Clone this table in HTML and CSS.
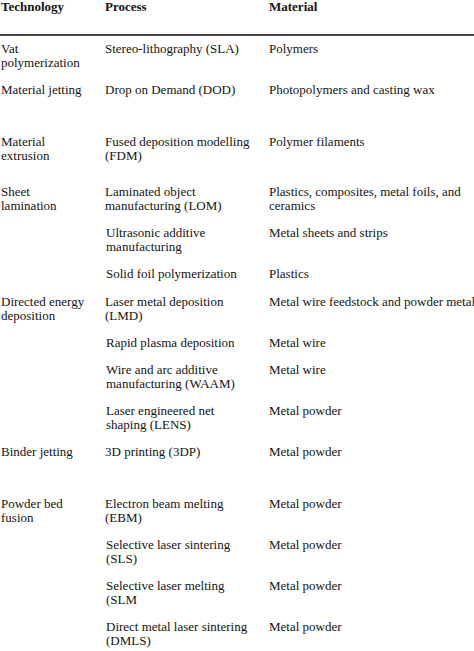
FILE: index.html
```html
<!DOCTYPE html>
<html lang="en">
<head>
<meta charset="utf-8">
<title>Additive manufacturing technologies</title>
<link rel="stylesheet" href="styles.css">
</head>
<body>
<table class="am-table">
  <colgroup>
    <col class="col-tech">
    <col class="col-proc">
    <col class="col-mat">
  </colgroup>
  <thead>
    <tr>
      <th>Technology</th>
      <th>Process</th>
      <th>Material</th>
    </tr>
  </thead>
  <tbody>
    <tr class="first">
      <td>Vat<br>polymerization</td>
      <td>Stereo-lithography (SLA)</td>
      <td>Polymers</td>
    </tr>
    <tr class="gap-xl">
      <td>Material jetting</td>
      <td>Drop on Demand (DOD)</td>
      <td>Photopolymers and casting wax</td>
    </tr>
    <tr class="gap-md">
      <td>Material<br>extrusion</td>
      <td>Fused deposition modelling<br>(FDM)</td>
      <td>Polymer filaments</td>
    </tr>
    <tr>
      <td rowspan="3">Sheet<br>lamination</td>
      <td>Laminated object<br>manufacturing (LOM)</td>
      <td>Plastics, composites, metal foils, and<br>ceramics</td>
    </tr>
    <tr>
      <td>Ultrasonic additive<br>manufacturing</td>
      <td>Metal sheets and strips</td>
    </tr>
    <tr>
      <td>Solid foil polymerization</td>
      <td>Plastics</td>
    </tr>
    <tr>
      <td rowspan="4">Directed energy<br>deposition</td>
      <td>Laser metal deposition<br>(LMD)</td>
      <td>Metal wire feedstock and powder metal</td>
    </tr>
    <tr>
      <td>Rapid plasma deposition</td>
      <td>Metal wire</td>
    </tr>
    <tr>
      <td>Wire and arc additive<br>manufacturing (WAAM)</td>
      <td>Metal wire</td>
    </tr>
    <tr>
      <td>Laser engineered net<br>shaping (LENS)</td>
      <td>Metal powder</td>
    </tr>
    <tr class="gap-xl">
      <td>Binder jetting</td>
      <td>3D printing (3DP)</td>
      <td>Metal powder</td>
    </tr>
    <tr>
      <td rowspan="4">Powder bed<br>fusion</td>
      <td>Electron beam melting<br>(EBM)</td>
      <td>Metal powder</td>
    </tr>
    <tr>
      <td>Selective laser sintering<br>(SLS)</td>
      <td>Metal powder</td>
    </tr>
    <tr>
      <td>Selective laser melting<br>(SLM</td>
      <td>Metal powder</td>
    </tr>
    <tr>
      <td>Direct metal laser sintering<br>(DMLS)</td>
      <td>Metal powder</td>
    </tr>
  </tbody>
</table>
</body>
</html>
```

FILE: styles.css
```css
html, body {
  margin: 0;
  padding: 0;
  overflow: hidden;
  background: #ffffff;
}

body {
  font-family: "Liberation Serif", "Times New Roman", serif;
  font-size: 13px;
  line-height: 14px;
  color: #141414;
}

.am-table {
  width: 474px;
  table-layout: fixed;
  border-collapse: collapse;
  border-spacing: 0;
  font-family: "Liberation Serif", "Times New Roman", serif;
  font-size: 13px;
}

.col-tech { width: 105px; }
.col-proc { width: 164px; }
.col-mat { width: 205px; }

.am-table th,
.am-table td {
  font-family: "Liberation Serif", "Times New Roman", serif;
  padding: 0 0 13.15px 0;
  text-align: left;
  vertical-align: top;
  white-space: nowrap;
}

.am-table th {
  font-weight: bold;
  padding: 0 0 20px 0;
  border-bottom: 2px solid #454545;
}

.am-table th:first-child,
.am-table td:first-child {
  padding-left: 1px;
}

.am-table tr.first td {
  padding-top: 6px;
}

.am-table tr.gap-xl td {
  padding-bottom: 37.5px;
}

.am-table tr.gap-md td {
  padding-bottom: 22.5px;
}
```
